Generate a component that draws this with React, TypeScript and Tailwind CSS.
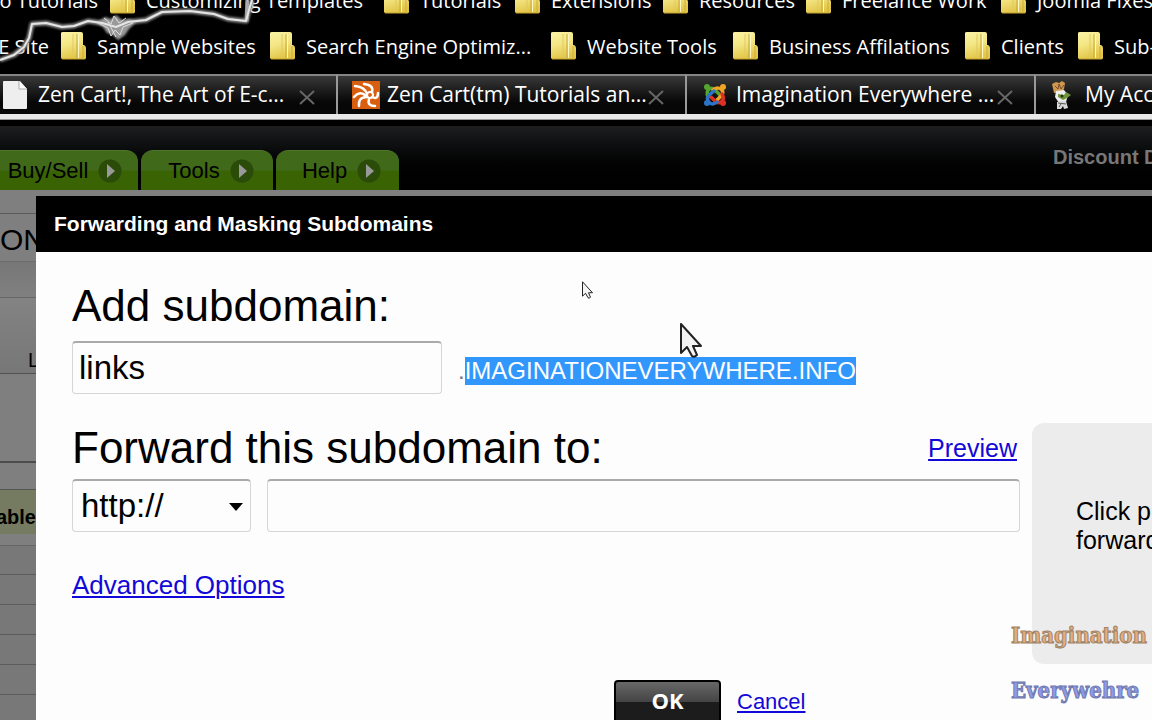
import type { ReactNode } from 'react';

const topBookmarks = ['o Tutorials', 'Customizing Templates', 'Tutorials', 'Extensions', 'Resources', 'Freelance Work', 'Joomla Fixes'];
const bottomBookmarks = ['E Site', 'Sample Websites', 'Search Engine Optimiz...', 'Website Tools', 'Business Affilations', 'Clients', 'Sub-'];

const sideRows = ['h-[29px]', 'h-[30px]', 'h-[30px]', 'h-[30px]', 'h-[30px]', 'h-[30px]', 'h-[30px]'];

function FolderIcon() {
  return (
    <svg className="mb-1 h-[29px] w-[26px] shrink-0" viewBox="0 0 26 29" aria-hidden="true">
      <defs>
        <linearGradient id="folder" x1="0" y1="0" x2="0.3" y2="1">
          <stop offset="0" stopColor="#fbf4a6" />
          <stop offset="0.5" stopColor="#f4e684" />
          <stop offset="1" stopColor="#e2c648" />
        </linearGradient>
      </defs>
      <path d="M2 1h18q2 0 2 2v11h1q2 1 2 3v10q0 1-1 1H2q-2 0-2-1V2q0-1 2-1z" fill="url(#folder)" />
      <path d="M12 3v24" stroke="#e0c964" />
      <path d="M16 3v24" stroke="#c9a93a" />
      <path d="M17.500 3v24" stroke="#fdf8c4" />
      <path d="M22 15v12" stroke="#cfae3c" />
      <path d="M1 28h23" stroke="#c9a430" />
    </svg>
  );
}

function Bookmarks({ items, columns }: { items: string[]; columns: string }) {
  return (
    <ul className={`grid h-[46px] shrink-0 items-center ${columns}`}>
      {items.map((name, index) => (
        <li key={name} className="min-w-0">
          <a href="#" className={`flex items-center gap-2.5 whitespace-nowrap ${index === 0 ? 'justify-end pr-3' : ''}`}>
            {index > 0 && <FolderIcon />}
            {name}
          </a>
        </li>
      ))}
    </ul>
  );
}

function Lightning() {
  return (
    <svg className="pointer-events-none absolute top-0 left-0 h-[70px] w-[270px]" viewBox="0 0 270 70" fill="none" aria-hidden="true">
      <defs>
        <filter id="glow" x="-10%" y="-30%" width="120%" height="160%">
          <feGaussianBlur stdDeviation="1.200" />
        </filter>
        <filter id="soft">
          <feGaussianBlur stdDeviation="0.500" />
        </filter>
      </defs>
      <g strokeLinejoin="round">
        <path d="M0 60L14 55 24 47 29 38 32 24 46 23 62 27 74 26 88 21 102 23 116 27 128 22 146 20 162 12 190 11 214 14 228 19 246 21 249 10 252 0" stroke="#8c8c8c" strokeWidth="5" filter="url(#glow)" />
        <path d="M246 21L248 0" stroke="#aaa" strokeWidth="6" filter="url(#glow)" />
        <path d="M96 23l9-6 6 2 5-4 6 5 8-1 6 3-7 7-4 6-7 5-5-5-6-2-4-6z" fill="#999" filter="url(#glow)" />
        <g filter="url(#soft)">
          <path d="M0 60L14 55 24 47 29 38 32 24 46 23 62 27 74 26 88 21 102 23 116 27 128 22 146 20 162 12 190 11 214 14 228 19 246 21 249 10 252 0" stroke="#e4e4e4" strokeWidth="2" />
          <path d="M98 23l10 5 3 8 4-6 5 5 3-8 10-4M104 18l7 6 3-8 5 7 7-5M108 22l8 15" stroke="#ddd" />
        </g>
      </g>
    </svg>
  );
}

function PageIcon() {
  return (
    <svg className="h-7 w-7" viewBox="0 0 28 28" aria-hidden="true">
      <path d="M1 0h16l7 8v19q0 1-1 1H1q-1 0-1-1V1q0-1 1-1z" fill="#eee" />
      <path d="M16 0v8h8" fill="#fff" stroke="#aaa" />
    </svg>
  );
}

function ZenIcon() {
  return (
    <svg className="h-7 w-7" viewBox="0 0 28 28" fill="none" aria-hidden="true">
      <path d="M0 0h28v28H0z" fill="#d95f10" />
      <circle cx="18" cy="14" r="3" stroke="#fff" strokeWidth="2" />
      <g stroke="#fff" strokeWidth="2.500" strokeLinecap="round">
        <path d="M15 13Q13 6 3 5" />
        <path d="M14 15Q8 9 2 16" />
        <path d="M15 16Q6 16 7 25" />
        <path d="M17 18Q15 25 23 25" />
        <path d="M20 16Q26 19 26 12" />
        <path d="M20 11Q22 4 12 3" />
      </g>
    </svg>
  );
}

function JoomlaIcon() {
  return (
    <svg className="h-7 w-7" viewBox="0 0 28 28" fill="none" aria-hidden="true">
      <g strokeWidth="3.500" strokeLinecap="round" strokeLinejoin="round">
        <path d="M7 16Q5 11 8 8Q11 6 14 9L19 14" stroke="#55a630" />
        <path d="M12 9Q17 5 21 9Q23 12 20 15L15 20" stroke="#efa424" />
        <path d="M21 13Q24 18 20 21Q17 23 14 20L10 16" stroke="#df3024" />
        <path d="M16 21Q11 25 8 21Q5 18 8 14L13 10" stroke="#2d74c8" />
      </g>
      <circle cx="6" cy="6" r="3" fill="#55a630" />
      <circle cx="22" cy="6" r="3" fill="#efa424" />
      <circle cx="22" cy="22" r="3" fill="#df3024" />
      <circle cx="6" cy="22" r="3" fill="#2d74c8" />
    </svg>
  );
}

function MascotIcon() {
  return (
    <svg className="h-7 w-7" viewBox="0 0 28 28" aria-hidden="true">
      <path d="M2 3l4-2 3 1 3-2 3 2-1 6-2 3-8 1z" fill="#cf9850" />
      <path d="M5 5l3 3 1-5 2 5 3-4" stroke="#7b4a25" fill="none" />
      <path d="M6 10l8-1 4 5-2 7-7 1-4-6z" fill="#eee" />
      <path d="M8 13l6 1 2-3 5 3-4 3-4 2-5-3z" fill="#71953c" />
      <circle cx="12" cy="15" r="1.500" fill="#263514" />
      <path d="M7 21l4-1 5 0 2 7-4 1-1-3-2 3H7z" fill="#d9d9d9" />
      <path d="M8 22l8 1M9 26l2-3" stroke="#555" />
    </svg>
  );
}

function BrowserTab({ icon, title }: { icon: ReactNode; title: string }) {
  return (
    <div className="flex items-center border-t-2 border-l-2 border-t-[#858585] border-l-[#9a9a9a] bg-linear-to-b from-[#3a3a3a] to-[#070707] to-70% pl-3.5">
      {icon}
      <span className="ml-[7px] w-[261px] whitespace-nowrap">{title}</span>
      <button aria-label={`Close ${title}`} className="pt-1">
        <svg className="h-4 w-4" viewBox="0 0 16 16" stroke="#666" strokeWidth="2" aria-hidden="true">
          <path d="M1 2l14 13M15 2L1 15" />
        </svg>
      </button>
    </div>
  );
}

function MenuTab({ label }: { label: string }) {
  return (
    <button className="flex items-center justify-center gap-2.5 rounded-t-xl border-t border-[#4f752b] bg-linear-to-b from-[#40691a] from-48% to-[#3a6404] to-52% pl-2">
      {label}
      <svg className="h-6 w-6" viewBox="0 0 24 24" aria-hidden="true">
        <circle cx="12" cy="12" r="11.500" fill="#2b4b08" />
        <path d="M9 5l8 7-8 7z" fill="#999" />
      </svg>
    </button>
  );
}

function Cursor({ className }: { className: string }) {
  return (
    <svg className={className} viewBox="0 0 22 35" aria-hidden="true">
      <path d="M1 1v29l6-6 5 9q2 2 5-1l-4-9h8z" fill="#f4f4f4" stroke="#222" strokeWidth="2" strokeLinejoin="round" />
    </svg>
  );
}

const fieldStyle = 'h-[53px] rounded border border-[#d6d6d6] border-t-2 border-t-[#aaa] bg-[#fdfdfd] text-[33px] text-black outline-none';
const linkStyle = 'text-[#1208d8] underline decoration-2 underline-offset-2';

export default function App() {
  return (
    <div className="relative flex h-screen flex-col overflow-hidden bg-black font-['Liberation_Sans',Arial,sans-serif]">
      <header className="font-['Open_Sans','Noto_Sans',sans-serif] text-[21px] text-white">
        <nav aria-label="Bookmarks" className="flex h-[70px] flex-col justify-end overflow-hidden text-xl">
          <Bookmarks items={topBookmarks} columns="grid-cols-[110px_274px_131px_148px_143px_195px_1fr]" />
          <Bookmarks items={bottomBookmarks} columns="grid-cols-[61px_209px_281px_182px_232px_113px_1fr]" />
        </nav>
        <Lightning />
        <div className="mt-1 -ml-[13px] grid h-10 grid-cols-[repeat(4,349px)]">
          <BrowserTab icon={<PageIcon />} title="Zen Cart!, The Art of E-c..." />
          <BrowserTab icon={<ZenIcon />} title="Zen Cart(tm) Tutorials an..." />
          <BrowserTab icon={<JoomlaIcon />} title="Imagination Everywhere ..." />
          <BrowserTab icon={<MascotIcon />} title="My Acc" />
        </div>
        <div className="mb-1.5 h-1.5 border-b border-[#999] bg-[#e8e8e8]" />
      </header>

      <div className="flex h-16 shrink-0 items-end justify-between bg-linear-to-b from-[#1d1f20] to-black text-[22px]">
        <nav aria-label="Site" className="-ml-4 grid h-10 grid-cols-[154px_132px_123px] gap-[3px]">
          <MenuTab label="Buy/Sell" />
          <MenuTab label="Tools" />
          <MenuTab label="Help" />
        </nav>
        <p className="h-full w-[99px] pt-[17px] text-xl font-bold whitespace-nowrap text-[#777]">Discount D</p>
      </div>

      <main className="flex flex-1 bg-[#7f7f7f]">
        <aside className="w-9 overflow-hidden text-black">
          <div className="h-6 border-b border-[#5c5c5c]" />
          <div className="h-12 border-b border-[#6c6c6c] pt-2 text-[30px] leading-9">ON</div>
          <div className="h-9 border-b border-[#666] bg-linear-to-b from-[#777] to-[#808080]" />
          <div className="h-[76px] border-b border-[#505050] bg-linear-to-b from-[#838383] to-[#777] pt-[50px] pl-7 text-xl leading-6">L</div>
          <div className="h-[89px] border-b-2 border-[#4c4c4c]" />
          <div className="h-[27px] border-b border-[#555]" />
          <div className="flex h-11 items-center justify-end bg-[#747b60] pt-2.5 text-xl font-bold">able</div>
          <div className="h-3 border-b border-[#666]" />
          {sideRows.map((height, index) => (
            <div key={index} className={`${height} border-b border-[#5c5c5c] bg-[#787878]`} />
          ))}
        </aside>

        <section role="dialog" aria-labelledby="dialog-title" className="mt-1.5 min-w-0 flex-1 bg-[#fdfdfd] text-black">
          <h1 id="dialog-title" className="flex h-14 items-center bg-black pl-[18px] text-[21px] font-bold text-white">
            Forwarding and Masking Subdomains
          </h1>
          <form className="pt-[30px] pl-9">
            <label htmlFor="subdomain" className="block text-[44px] leading-[48px]">Add subdomain:</label>
            <div className="mt-[11px] flex items-center">
              <input id="subdomain" defaultValue="links" className={`${fieldStyle} w-[370px] px-1.5`} />
              <p className="ml-4 pt-1.5 text-2xl leading-7">
                <span className="text-[#777]">.</span>
                <span className="inline-block bg-[#3297fd] text-white">IMAGINATIONEVERYWHERE.INFO</span>
              </p>
            </div>

            <div className="mt-[29px] flex items-start gap-3">
              <div className="flex-1 pt-px">
                <div className="flex items-center justify-between pr-[3px]">
                  <label htmlFor="target" className="text-[44px] leading-[48px]">Forward this subdomain to:</label>
                  <a href="#" className={`${linkStyle} pt-0.5 text-[25px]`}>Preview</a>
                </div>
                <div className="mt-[7px] flex gap-4">
                  <div className="relative">
                    <select aria-label="Protocol" className={`${fieldStyle} w-[179px] appearance-none pb-1 pl-2`}>
                      <option>http://</option>
                    </select>
                    <svg className="pointer-events-none absolute top-6 right-2 h-2 w-3.5" viewBox="0 0 14 8" aria-hidden="true">
                      <path d="M0 0h14L7 8z" />
                    </svg>
                  </div>
                  <input id="target" className={`${fieldStyle} min-w-0 flex-1 px-2`} />
                </div>
                <a href="#" className={`${linkStyle} mt-[37px] inline-block text-[26px] leading-8`}>Advanced Options</a>
              </div>
              <aside className="h-[241px] w-[120px] rounded-l-xl bg-[#ececec] pt-[74px] pl-11 text-[25px] leading-[29px] whitespace-nowrap">
                Click p<br />forward
              </aside>
            </div>

            <div className="mt-4 flex items-center gap-4 pl-[542px]">
              <button type="button" className="h-11 w-[107px] rounded border-2 border-black bg-linear-to-b from-[#686868] via-[#444] via-50% to-[#1c1c1c] to-50% pb-1 font-['Open_Sans',sans-serif] text-[22px] font-bold text-white">
                OK
              </button>
              <a href="#" className={`${linkStyle} pb-0.5 text-[22px]`}>Cancel</a>
            </div>
          </form>
        </section>
      </main>

      <Cursor className="absolute top-[281px] left-[582px] h-[18px] w-[11px]" />
      <Cursor className="absolute top-[323px] left-[680px] h-[35px] w-[22px]" />
      <div className="absolute right-1 bottom-0.5 w-[137px] font-['DejaVu_Serif_Condensed','DejaVu_Serif',serif] text-[22px] leading-[55px] font-bold whitespace-nowrap">
        <p className="text-[#e6ad7c] [-webkit-text-stroke:1px_#a08468]">Imagination</p>
        <p className="text-[#8f9be8] [-webkit-text-stroke:1px_#7079b0]">Everywehre</p>
      </div>
    </div>
  );
}
